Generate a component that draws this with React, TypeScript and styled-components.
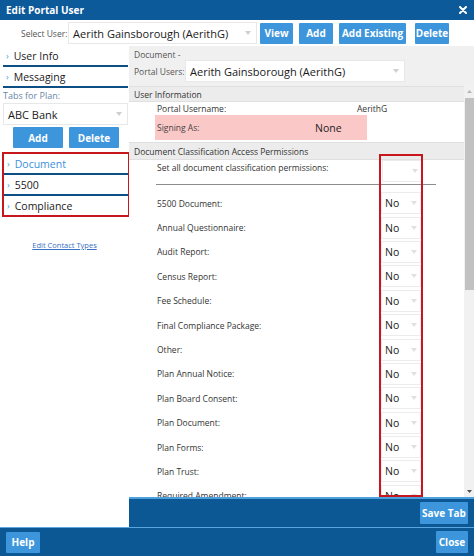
import React from "react";
import styled, { createGlobalStyle } from "styled-components";

const GlobalStyle = createGlobalStyle`
  html, body { margin: 0; padding: 0; background: #fff; }
  body { font-family: "Open Sans", "Noto Sans", sans-serif; }
  * { box-sizing: border-box; }
`;

const DARK = "#0b5894";
const BTN = "#3d96dc";

const Window = styled.div`
  width: 474px;
  height: 556px;
  display: flex;
  flex-direction: column;
  overflow: hidden;
  background: #fff;
`;

const TitleBar = styled.div`
  height: 20px;
  flex: none;
  background: #0c5a9a;
  color: #fff;
  display: flex;
  align-items: center;
  justify-content: space-between;
  padding: 0 7px 0 6px;
  font-weight: 700;
  font-size: 10px;
`;

const SelectUserRow = styled.div`
  height: 26px;
  flex: none;
  display: flex;
  align-items: center;
  padding-left: 21px;
`;

const SmallLabel = styled.span`
  font-size: 8.5px;
  color: #555;
`;

const UserLabel = styled(SmallLabel)`
  width: 47px;
`;

const SelectBox = styled.div<{ $w: number; $h?: number; $fs?: number }>`
  width: ${(p) => p.$w}px;
  height: ${(p) => p.$h ?? 22}px;
  flex: none;
  background: #fff;
  border: 1px solid #e8e8e8;
  display: flex;
  align-items: center;
  justify-content: space-between;
  padding: 0 5px 0 4px;
  font-size: ${(p) => p.$fs ?? 11}px;
  color: #1a1a1a;
`;

const Button = styled.button<{ $w: number; $h?: number; $ml?: number }>`
  width: ${(p) => p.$w}px;
  height: ${(p) => p.$h ?? 21}px;
  margin-left: ${(p) => p.$ml ?? 0}px;
  flex: none;
  border: none;
  border-radius: 1px;
  background: ${BTN};
  color: #fff;
  font-family: "Open Sans", sans-serif;
  font-weight: 700;
  font-size: 10px;
  padding: 0;
  display: flex;
  align-items: center;
  justify-content: center;
`;

const Body = styled.div`
  flex: 1;
  display: flex;
  min-height: 0;
`;

const Sidebar = styled.div`
  width: 129px;
  flex: none;
  display: flex;
  flex-direction: column;
`;

const NavItem = styled.div<{ $active?: boolean; $last?: boolean; $h?: number }>`
  height: ${(p) => p.$h ?? 21}px;
  display: flex;
  align-items: center;
  padding-left: 3px;
  border-bottom: ${(p) => (p.$last ? "none" : `2px solid #0d4f85`)};
  font-size: 10.5px;
  color: ${(p) => (p.$active ? "#3b8fd9" : "#1a1a1a")};
`;

const NavList = styled.div`
  margin-left: 3px;
  width: 125px;
  display: flex;
  flex-direction: column;
`;

const Chevron = styled.span`
  color: #4a9ad8;
  font-size: 9px;
  margin-right: 5px;
  line-height: 1;
`;

const TabsLabel = styled.div`
  height: 15px;
  margin-left: 3px;
  display: flex;
  align-items: center;
  font-size: 9px;
  color: #6a86a8;
`;

const PlanSelectWrap = styled.div`
  margin-left: 3px;
`;

const SideButtons = styled.div`
  display: flex;
  gap: 6px;
  padding-left: 13px;
  margin-top: 2px;
`;

const RedGroup = styled.div`
  margin: 4px 0 0 2px;
  width: 128px;
  border: 2px solid #c8161d;
  display: flex;
  flex-direction: column;
`;

const EditLink = styled.a`
  margin-top: 23px;
  align-self: center;
  font-size: 7.5px;
  color: #3670c4;
  text-decoration: underline;
`;

const Main = styled.div`
  flex: 1;
  display: flex;
  flex-direction: column;
  min-width: 0;
`;

const MainHeader = styled.div`
  height: 40px;
  flex: none;
  background: #f0f0f0;
  padding: 2px 0 0 5px;
  display: flex;
  flex-direction: column;
`;

const DocLabel = styled.div`
  height: 12px;
  font-size: 8.5px;
  color: #555;
  display: flex;
  align-items: center;
`;

const PortalRow = styled.div`
  display: flex;
  align-items: center;
`;

const PortalLabel = styled(SmallLabel)`
  width: 51px;
`;

const ScrollArea = styled.div`
  flex: 1;
  display: flex;
  min-height: 0;
`;

const ScrollContent = styled.div`
  flex: 1;
  position: relative;
  overflow: hidden;
  background: #fff;
`;

const SectionHeader = styled.div<{ $h?: number }>`
  height: ${(p) => p.$h ?? 16}px;
  background: #ececec;
  border-top: 1px solid #e0e0e0;
  border-bottom: 1px solid #e0e0e0;
  display: flex;
  align-items: center;
  padding-left: 5px;
  font-size: 8.5px;
  color: #333;
`;

const InfoRow = styled.div`
  height: 13px;
  display: grid;
  grid-template-columns: 200px auto;
  align-items: center;
  padding-left: 28px;
  font-size: 8.5px;
  color: #333;
`;

const SigningBox = styled.div`
  margin-left: 26px;
  width: 212px;
  height: 25px;
  background: #fbc8c8;
  display: grid;
  grid-template-columns: 158px auto;
  align-items: center;
  padding-left: 2px;
  font-size: 8.5px;
  color: #444;
  margin-bottom: 2px;
`;

const NoneText = styled.span`
  font-size: 10.5px;
  color: #222;
`;

const SetAllRow = styled.div`
  height: 25px;
  margin-left: 27px;
  width: 280px;
  border-bottom: 1px solid #8c8c8c;
  display: grid;
  grid-template-columns: 225px 40px;
  align-items: start;
  padding-left: 1px;
  font-size: 8.5px;
  color: #333;
`;

const SetAllLabel = styled.span`
  margin-top: 2px;
`;

const PermList = styled.div`
  padding-top: 6px;
  display: flex;
  flex-direction: column;
`;

const PermRow = styled.div`
  height: 24.4px;
  flex: none;
  display: grid;
  grid-template-columns: 224px 40px;
  align-items: center;
  padding-left: 28px;
  font-size: 8.5px;
  color: #333;
`;

const PermSelect = styled.div`
  width: 40px;
  height: 22px;
  border: 1px solid #ececec;
  background: #fff;
  display: flex;
  align-items: center;
  justify-content: space-between;
  padding: 0 3px 0 3px;
  font-size: 10.5px;
  color: #1a1a1a;
`;

const RedOverlay = styled.div`
  position: absolute;
  left: 250px;
  top: 68px;
  width: 44px;
  height: 343px;
  border: 2px solid #c8161d;
  pointer-events: none;
`;

const Scrollbar = styled.div`
  width: 10px;
  flex: none;
  background: #f1f1f1;
  display: flex;
  flex-direction: column;
  align-items: center;
`;

const ScrollArrow = styled.div`
  height: 11px;
  flex: none;
  display: flex;
  align-items: center;
  justify-content: center;
`;

const Thumb = styled.div`
  width: 9px;
  height: 192px;
  margin-top: 1px;
  background: #c1c1c1;
`;

const ScrollSpacer = styled.div`
  flex: 1;
`;

const BottomBar = styled.div`
  height: 30px;
  flex: none;
  background: ${DARK};
  border-top: 2px solid #4ea0dc;
  display: flex;
  align-items: center;
  justify-content: flex-end;
  padding-right: 6px;
`;

const Footer = styled.div`
  height: 29px;
  flex: none;
  background: ${DARK};
  border-top: 1px solid #5aa6e0;
  display: flex;
  align-items: center;
  justify-content: space-between;
  padding: 0 6px;
`;

const Caret = ({ color = "#cfcfcf" }: { color?: string }) => (
  <svg width="6" height="4" viewBox="0 0 6 4">
    <path d="M0 0 L6 0 L3 4 Z" fill={color} />
  </svg>
);

const CloseX = () => (
  <svg width="8" height="8" viewBox="0 0 8 8">
    <path d="M1 1 L7 7 M7 1 L1 7" stroke="#fff" strokeWidth="2" strokeLinecap="round" />
  </svg>
);

const perms = [
  "5500 Document:",
  "Annual Questionnaire:",
  "Audit Report:",
  "Census Report:",
  "Fee Schedule:",
  "Final Compliance Package:",
  "Other:",
  "Plan Annual Notice:",
  "Plan Board Consent:",
  "Plan Document:",
  "Plan Forms:",
  "Plan Trust:",
  "Required Amendment:",
];

export default function App() {
  return (
    <>
      <GlobalStyle />
      <Window>
        <TitleBar>
          <span>Edit Portal User</span>
          <CloseX />
        </TitleBar>
        <SelectUserRow>
          <UserLabel>Select User:</UserLabel>
          <SelectBox $w={189} $fs={11}>
            <span>Aerith Gainsborough (AerithG)</span>
            <Caret />
          </SelectBox>
          <Button $w={33} $ml={3}>View</Button>
          <Button $w={34} $ml={6}>Add</Button>
          <Button $w={67} $ml={6}>Add Existing</Button>
          <Button $w={34} $ml={9}>Delete</Button>
        </SelectUserRow>
        <Body>
          <Sidebar>
            <NavList>
              <NavItem>
                <Chevron>›</Chevron>User Info
              </NavItem>
              <NavItem>
                <Chevron>›</Chevron>Messaging
              </NavItem>
            </NavList>
            <TabsLabel>Tabs for Plan:</TabsLabel>
            <PlanSelectWrap>
              <SelectBox $w={125} $fs={11}>
                <span>ABC Bank</span>
                <Caret />
              </SelectBox>
            </PlanSelectWrap>
            <SideButtons>
              <Button $w={50}>Add</Button>
              <Button $w={50}>Delete</Button>
            </SideButtons>
            <RedGroup>
              <NavItem $active>
                <Chevron>›</Chevron>Document
              </NavItem>
              <NavItem>
                <Chevron>›</Chevron>5500
              </NavItem>
              <NavItem $last $h={19}>
                <Chevron>›</Chevron>Compliance
              </NavItem>
            </RedGroup>
            <EditLink>Edit Contact Types</EditLink>
          </Sidebar>
          <Main>
            <MainHeader>
              <DocLabel>Document -</DocLabel>
              <PortalRow>
                <PortalLabel>Portal Users:</PortalLabel>
                <SelectBox $w={220} $fs={11}>
                  <span>Aerith Gainsborough (AerithG)</span>
                  <Caret />
                </SelectBox>
              </PortalRow>
            </MainHeader>
            <ScrollArea>
              <ScrollContent>
                <SectionHeader>User Information</SectionHeader>
                <InfoRow>
                  <span>Portal Username:</span>
                  <span>AerithG</span>
                </InfoRow>
                <SigningBox>
                  <span>Signing As:</span>
                  <NoneText>None</NoneText>
                </SigningBox>
                <SectionHeader $h={18}>Document Classification Access Permissions</SectionHeader>
                <SetAllRow>
                  <SetAllLabel>Set all document classification permissions:</SetAllLabel>
                  <PermSelect>
                    <span />
                    <Caret color="#e0e0e0" />
                  </PermSelect>
                </SetAllRow>
                <PermList>
                  {perms.map((p) => (
                    <PermRow key={p}>
                      <span>{p}</span>
                      <PermSelect>
                        <span>No</span>
                        <Caret color="#e0e0e0" />
                      </PermSelect>
                    </PermRow>
                  ))}
                </PermList>
                <RedOverlay />
              </ScrollContent>
              <Scrollbar>
                <ScrollArrow>
                  <svg width="5" height="3" viewBox="0 0 5 3">
                    <path d="M0 3 L5 3 L2.5 0 Z" fill="#b5b5b5" />
                  </svg>
                </ScrollArrow>
                <Thumb />
                <ScrollSpacer />
                <ScrollArrow>
                  <svg width="5" height="3" viewBox="0 0 5 3">
                    <path d="M0 0 L5 0 L2.5 3 Z" fill="#505050" />
                  </svg>
                </ScrollArrow>
              </Scrollbar>
            </ScrollArea>
            <BottomBar>
              <Button $w={48} $h={22}>Save Tab</Button>
            </BottomBar>
          </Main>
        </Body>
        <Footer>
          <Button $w={34} $h={21}>Help</Button>
          <Button $w={32} $h={22}>Close</Button>
        </Footer>
      </Window>
    </>
  );
}
